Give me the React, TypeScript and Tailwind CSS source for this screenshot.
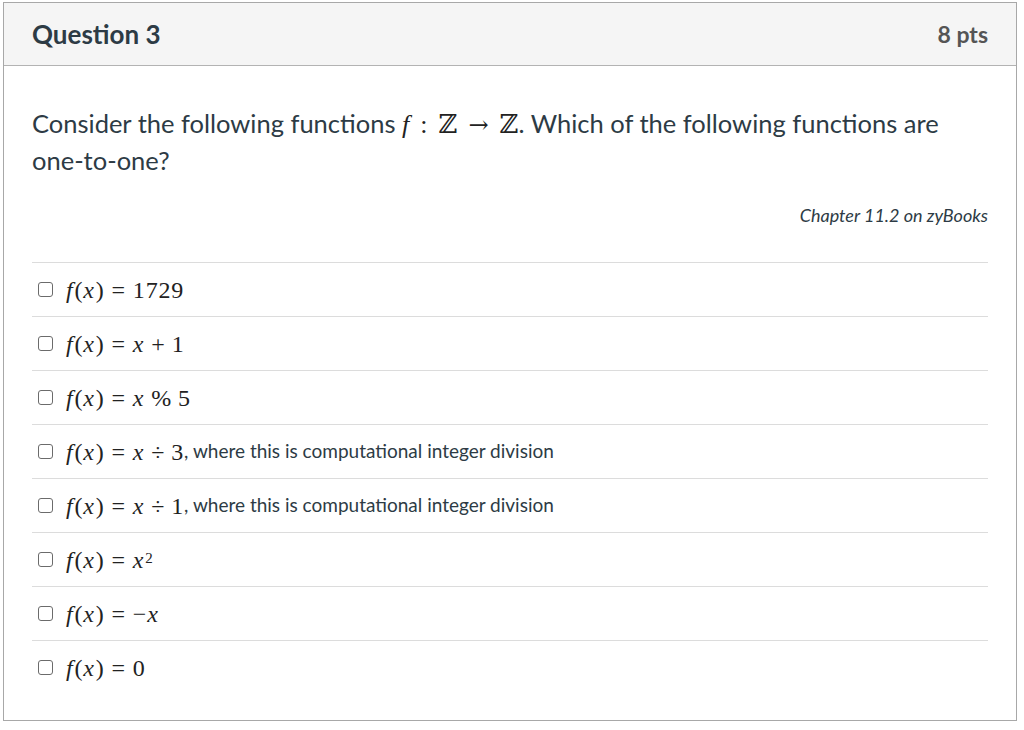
import React from "react";

const math = "font-['Liberation_Serif','DejaVu_Serif',serif] text-[24px] tracking-[0.8px] text-[#222] leading-none";

type Answer = { expr: React.ReactNode; note?: string };

const I = ({ children }: { children: React.ReactNode }) => <i className="pr-[1px]">{children}</i>;
const Rel = ({ children }: { children: React.ReactNode }) => <span className="mx-[7px]">{children}</span>;
const Op = ({ children }: { children: React.ReactNode }) => <span className="mx-[6px]">{children}</span>;

const fx = (
  <>
    <I>f</I>(<I>x</I>)<Rel>=</Rel>
  </>
);

const answers: Answer[] = [
  { expr: <>{fx}1729</> },
  { expr: <>{fx}<I>x</I><Op>+</Op>1</> },
  { expr: <>{fx}<I>x</I><Op>%</Op>5</> },
  { expr: <>{fx}<I>x</I><Op>÷</Op>3</>, note: ", where this is computational integer division" },
  { expr: <>{fx}<I>x</I><Op>÷</Op>1</>, note: ", where this is computational integer division" },
  { expr: <>{fx}<I>x</I><sup className="relative -top-[5px] text-[15px]">2</sup></> },
  { expr: <>{fx}−<I>x</I></> },
  { expr: <>{fx}0</> },
];

function AnswerRow({ a }: { a: Answer }) {
  return (
    <label className="flex h-[54px] items-center border-t border-[#dcdcdc] pl-[6px]">
      <span className="mr-[13px] size-[15px] shrink-0 rounded-[3px] border-[1.5px] border-[#6b6b6b] bg-white" />
      <span className={`${math} whitespace-pre`}>{a.expr}</span>
      {a.note && (
        <span className="text-[19px] text-[#2d3b45]">{a.note}</span>
      )}
    </label>
  );
}

export default function App() {
  return (
    <div className="min-h-[730px] bg-white pl-[3px] pt-[2px] font-['Lato','Liberation_Sans',sans-serif] text-[#2d3b45]">
      <div className="w-[1014px] border border-[#a8a8a8]">
        <div className="flex h-[63px] items-center justify-between border-b border-[#b3b3b3] bg-[#f5f5f5] px-[28px]">
          <h2 className="text-[26px] font-bold">Question 3</h2>
          <span className="text-[23px] font-bold text-[#555]">8 pts</span>
        </div>
        <div className="px-[28px] pt-[39px] pb-[26px]">
          <p className="text-[25.5px] leading-[37px]">
            Consider the following functions{" "}
            <span className="whitespace-nowrap font-['Liberation_Serif','DejaVu_Serif',serif] text-[26px] leading-none text-[#222]">
              <i>f</i>
              <span className="mx-[11px]">:</span>ℤ
              <span className="mx-[11px] font-['DejaVu_Serif',serif] text-[24px]">→</span>ℤ
            </span>
            . Which of the following functions are{" "}
            <span className="whitespace-nowrap">one-to-one?</span>
          </p>
          <p className="mt-[24px] text-right text-[18px] italic leading-[24px]">
            Chapter 11.2 on zyBooks
          </p>
          <div className="mt-[35px]">
            {answers.map((a, i) => (
              <AnswerRow key={i} a={a} />
            ))}
          </div>
        </div>
      </div>
    </div>
  );
}
